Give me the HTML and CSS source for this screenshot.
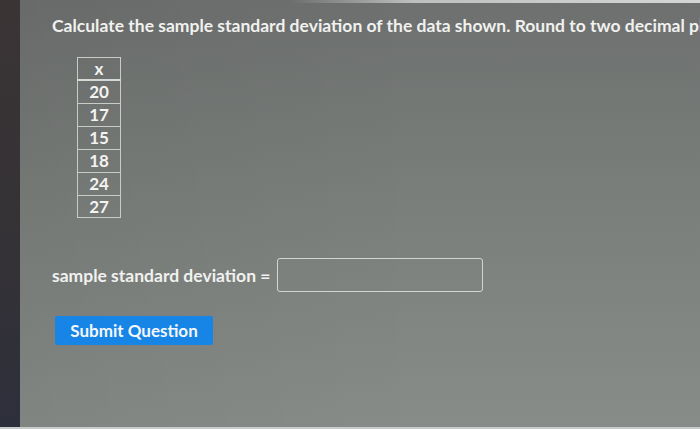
FILE: index.html
```html
<!DOCTYPE html>
<html>
<head>
<meta charset="utf-8">
<link rel="stylesheet" href="styles.css">
</head>
<body>
<div class="screen">
  <div class="bezel"></div>
  <div class="panel">
    <div class="topline"></div>
    <div class="content">
      <h1 class="question">Calculate the sample standard deviation of the data shown. Round to two decimal places.</h1>
      <table class="data">
        <thead><tr><th>x</th></tr></thead>
        <tbody>
          <tr><td>20</td></tr>
          <tr><td>17</td></tr>
          <tr><td>15</td></tr>
          <tr><td>18</td></tr>
          <tr><td>24</td></tr>
          <tr><td>27</td></tr>
        </tbody>
      </table>
      <div class="answer">
        <span class="label">sample standard deviation =</span>
        <span class="input"></span>
      </div>
      <button class="submit">Submit Question</button>
    </div>
  </div>
</div>
<div class="bottomline"></div>
</body>
</html>
```
FILE: styles.css
```css
html, body {
  margin: 0;
  padding: 0;
  width: 700px;
  height: 429px;
  overflow: hidden;
  background: #2f2e36;
  font-family: Lato, "DejaVu Sans", sans-serif;
}
.screen {
  display: flex;
  height: 427px;
}
.bezel {
  width: 20px;
  flex: none;
  background: linear-gradient(180deg, #3a3435 0%, #343236 60%, #2e2f3c 100%);
}
.panel {
  flex: 1;
  min-width: 0;
  position: relative;
  overflow: hidden;
  background:
    linear-gradient(90deg, rgba(0,0,0,0.05) 0%, rgba(0,0,0,0) 60%),
    linear-gradient(180deg, #6d706e 0%, #7a7e7b 45%, #878c88 100%);
}
.topline {
  position: absolute;
  top: 0;
  left: 270px;
  right: 0;
  height: 3px;
  background: linear-gradient(90deg, rgba(220,220,220,0) 0%, rgba(210,210,210,0.8) 30%, rgba(225,225,225,0.9) 100%);
}
.content {
  padding: 13px 0 0 32px;
  white-space: nowrap;
  overflow: hidden;
}
.question {
  margin: 0;
  font-size: 17.5px;
  font-weight: 700;
  color: #f1f1ef;
  line-height: 26px;
  overflow: hidden;
}
.data {
  margin: 18px 0 0 25px;
  border-collapse: collapse;
  color: #f3f3f1;
  font-size: 17px;
  font-weight: 700;
}
.data th, .data td {
  width: 42px;
  height: 22px;
  padding: 0;
  text-align: center;
  border: 1px solid #c9cbc8;
  line-height: 22px;
}
.data th {
  height: 21px;
  line-height: 21px;
  border-bottom: 2px solid #d6d8d5;
}
.data tbody tr:last-child td {
  height: 21px;
  line-height: 21px;
}
.answer {
  display: flex;
  align-items: center;
  margin-top: 40px;
}
.label {
  font-size: 17.5px;
  font-weight: 700;
  color: #f1f1ef;
  margin-right: 7px;
}
.input {
  width: 204px;
  height: 32px;
  border: 1px solid #d3d5d2;
  border-radius: 3px;
  box-sizing: content-box;
}
.submit {
  display: block;
  margin: 24px 0 0 3px;
  width: 158px;
  height: 29px;
  padding: 0;
  border: none;
  border-radius: 2px;
  background: #1785e6;
  color: #f4f7fb;
  font-family: Lato, "DejaVu Sans", sans-serif;
  font-size: 17px;
  font-weight: 700;
}
.bottomline {
  height: 2px;
  background: #c8cccb;
}
```
